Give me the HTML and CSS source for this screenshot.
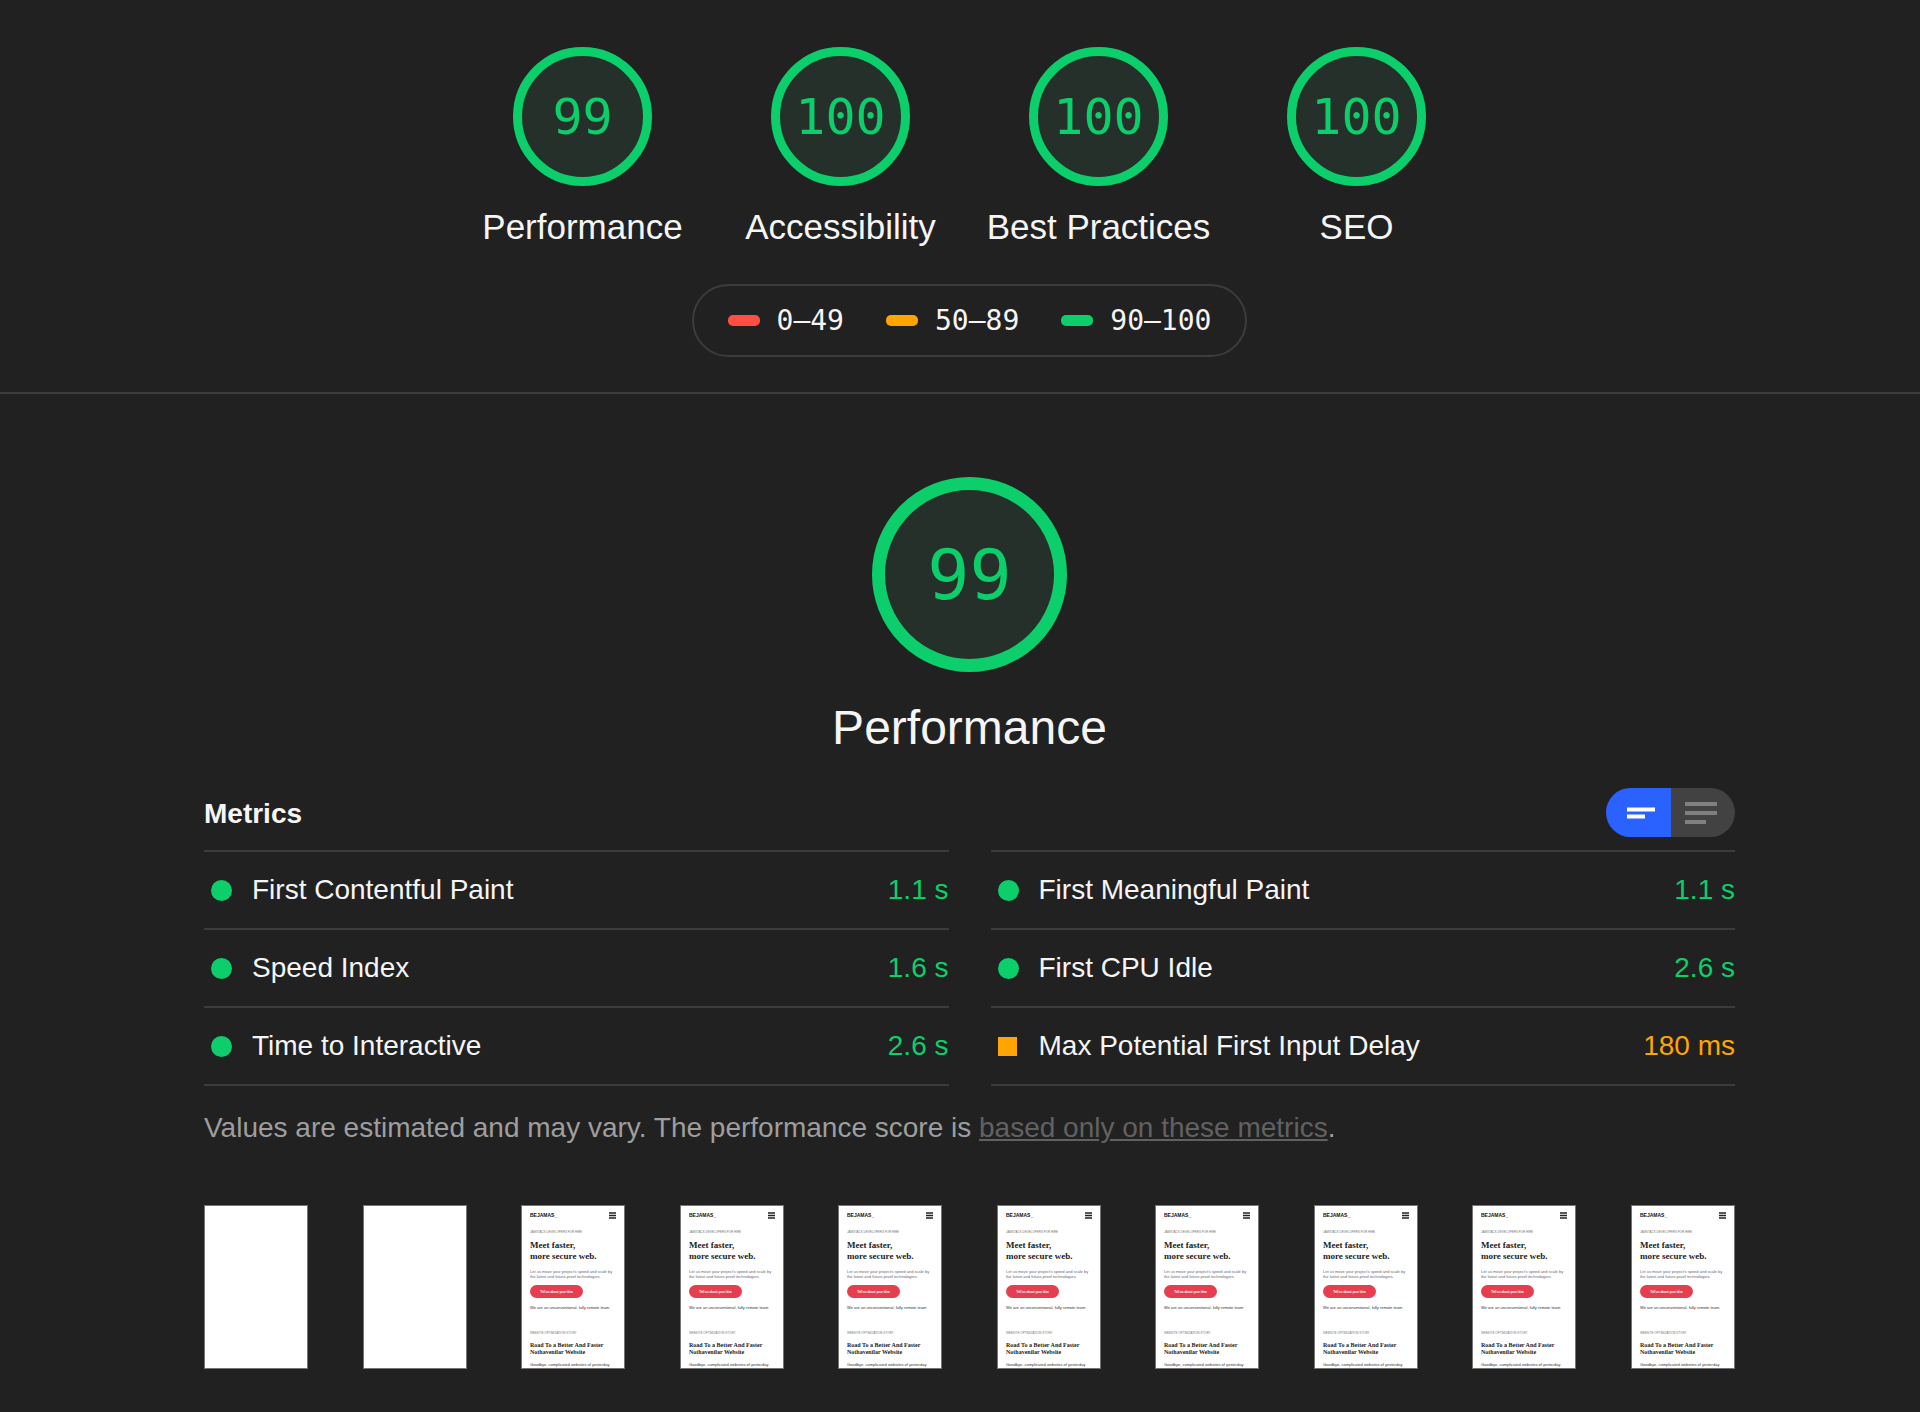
FILE: index.html
```html
<!DOCTYPE html>
<html lang="en">
<head>
    <meta charset="UTF-8">
    <meta name="viewport" content="width=device-width, initial-scale=1.0">
    <title>Lighthouse Report</title>
    <link rel="stylesheet" href="styles.css">
</head>
<body>
    <!-- Scores Header -->
    <header class="scores">
        <div class="gauges">
            <a class="gauge" href="#performance">
                <span class="gauge-circle">99</span>
                <span class="gauge-label">Performance</span>
            </a>
            <a class="gauge" href="#accessibility">
                <span class="gauge-circle">100</span>
                <span class="gauge-label">Accessibility</span>
            </a>
            <a class="gauge" href="#best-practices">
                <span class="gauge-circle">100</span>
                <span class="gauge-label">Best Practices</span>
            </a>
            <a class="gauge" href="#seo">
                <span class="gauge-circle">100</span>
                <span class="gauge-label">SEO</span>
            </a>
        </div>
        <div class="scale">
            <span class="range fail">0–49</span>
            <span class="range average">50–89</span>
            <span class="range pass">90–100</span>
        </div>
    </header>

    <!-- Performance Section -->
    <main class="category" id="performance">
        <div class="gauge gauge-large">
            <span class="gauge-circle">99</span>
            <h1 class="gauge-label">Performance</h1>
        </div>

        <div class="metrics-header">
            <h2>Metrics</h2>
            <label class="toggle">
                <input type="checkbox" aria-label="Show metric descriptions">
                <span class="toggle-short">
                    <svg width="28" height="12" viewBox="0 0 28 12"><path d="M0 2.5h28M0 9.5h18" stroke="currentColor" stroke-width="4"/></svg>
                </span>
                <span class="toggle-long">
                    <svg width="32" height="22" viewBox="0 0 32 22"><path d="M0 2h32M0 11h32M0 20h21" stroke="currentColor" stroke-width="4"/></svg>
                </span>
            </label>
        </div>

        <div class="metrics">
            <ul class="metrics-column">
                <li class="metric pass"><span class="metric-title">First Contentful Paint</span><span class="metric-value">1.1 s</span></li>
                <li class="metric pass"><span class="metric-title">Speed Index</span><span class="metric-value">1.6 s</span></li>
                <li class="metric pass"><span class="metric-title">Time to Interactive</span><span class="metric-value">2.6 s</span></li>
            </ul>
            <ul class="metrics-column">
                <li class="metric pass"><span class="metric-title">First Meaningful Paint</span><span class="metric-value">1.1 s</span></li>
                <li class="metric pass"><span class="metric-title">First CPU Idle</span><span class="metric-value">2.6 s</span></li>
                <li class="metric average"><span class="metric-title">Max Potential First Input Delay</span><span class="metric-value">180 ms</span></li>
            </ul>
        </div>

        <p class="disclaimer">Values are estimated and may vary. The performance score is <a href="#scoring">based only on these metrics</a>.</p>

        <!-- Filmstrip: the first loaded frame is reused by the ones after it -->
        <div class="filmstrip">
            <div class="frame"></div>
            <div class="frame"></div>
            <div class="frame">
                <svg viewBox="0 0 102 162">
                    <g id="preview">
                        <text class="pv-logo" x="8" y="11">BEJAMAS_</text>
                        <path d="M87 7h7M87 9.5h7M87 12h7" stroke="#222" stroke-width="1.5"/>
                        <text class="pv-kicker" x="8" y="27">JAMSTACK DEVELOPERS FOR HIRE</text>
                        <text class="pv-title" x="8" y="42">Meet faster,</text>
                        <text class="pv-title" x="8" y="53">more secure web.</text>
                        <text class="pv-text" x="8" y="67">Let us move your project's speed and scale by</text>
                        <text class="pv-text" x="8" y="72">the latest and future-proof technologies.</text>
                        <rect x="8" y="79" width="53" height="13" rx="6.5" fill="#e63e4e"/>
                        <text class="pv-button" x="34.5" y="87">Tell us about your idea</text>
                        <text class="pv-note" x="8" y="103">We are an unconventional, fully remote team</text>
                        <text class="pv-kicker" x="8" y="128">WEBSITE OPTIMIZATION STORY</text>
                        <text class="pv-subtitle" x="8" y="141">Road To a Better And Faster</text>
                        <text class="pv-subtitle" x="8" y="148">Nothavenilar Website</text>
                        <text class="pv-note" x="8" y="160">Goodbye, complicated websites of yesterday</text>
                    </g>
                </svg>
            </div>
            <div class="frame"><svg viewBox="0 0 102 162"><use href="#preview"/></svg></div>
            <div class="frame"><svg viewBox="0 0 102 162"><use href="#preview"/></svg></div>
            <div class="frame"><svg viewBox="0 0 102 162"><use href="#preview"/></svg></div>
            <div class="frame"><svg viewBox="0 0 102 162"><use href="#preview"/></svg></div>
            <div class="frame"><svg viewBox="0 0 102 162"><use href="#preview"/></svg></div>
            <div class="frame"><svg viewBox="0 0 102 162"><use href="#preview"/></svg></div>
            <div class="frame"><svg viewBox="0 0 102 162"><use href="#preview"/></svg></div>
        </div>
    </main>
</body>
</html>
```
FILE: styles.css
```css
/* Global Styles */
:root {
    --pass: #0cce6b;
    --average: #ffa400;
    --fail: #ff4e42;
    --line: #3c3c3c;
}

* {
    box-sizing: border-box;
}

body {
    margin: 0;
    background: #212121;
    color: #f5f5f5;
    font-family: Helvetica, "Liberation Sans", Arial, sans-serif;
    font-size: 28px;
    line-height: 40px;
}

.pass {
    --color: var(--pass);
}

.average {
    --color: var(--average);
}

.fail {
    --color: var(--fail);
}

/* Scores Header */
.scores {
    display: flex;
    flex-direction: column;
    align-items: center;
    padding: 47px 185px 35px 204px;
    border-bottom: 2px solid var(--line);
}

.gauges {
    display: flex;
    flex-wrap: wrap;
    justify-content: center;
}

.gauge {
    display: flex;
    flex-direction: column;
    align-items: center;
    gap: 21px;
    width: 258px;
    color: inherit;
    text-decoration: none;
}

.gauge-circle {
    display: flex;
    justify-content: center;
    align-items: center;
    width: 139px;
    height: 139px;
    border: 9px solid var(--pass);
    border-radius: 50%;
    background: #25302a;
    color: var(--pass);
    font-family: Menlo, "DejaVu Sans Mono", monospace;
    font-size: 50px;
}

.gauge-label {
    margin: 0;
    font-size: 35px;
    font-weight: normal;
    white-space: nowrap;
}

.scale {
    display: flex;
    align-items: center;
    gap: 42px;
    height: 73px;
    margin-top: 37px;
    padding: 0 34px;
    border: 2px solid var(--line);
    border-radius: 37px;
    font-family: Menlo, "DejaVu Sans Mono", monospace;
    font-size: 28px;
}

.range {
    display: flex;
    align-items: center;
    gap: 17px;
}

.range::before {
    content: "";
    width: 32px;
    height: 11px;
    border-radius: 5px;
    background: var(--color);
}

/* Performance Section */
.category {
    padding: 83px 185px 43px 204px;
}

.gauge-large {
    gap: 28px;
    width: auto;
    margin-bottom: 32px;
}

.gauge-large .gauge-circle {
    width: 195px;
    height: 195px;
    border-width: 13px;
    font-size: 70px;
}

.gauge-large .gauge-label {
    font-size: 48px;
    line-height: 56px;
}

.metrics-header {
    display: flex;
    justify-content: space-between;
    align-items: flex-end;
    margin-bottom: 13px;
}

.metrics-header h2 {
    margin: 0;
    padding-bottom: 3px;
    font-size: 28px;
}

.toggle {
    display: flex;
    position: relative;
    width: 129px;
    height: 49px;
    border-radius: 25px;
    overflow: hidden;
    cursor: pointer;
}

.toggle input {
    position: absolute;
    inset: 0;
    margin: 0;
    opacity: 0;
}

.toggle span {
    display: flex;
    align-items: center;
    width: 50%;
}

.toggle-short {
    justify-content: center;
    padding-left: 5px;
    background: #2962ff;
    color: #fff;
}

.toggle-long {
    padding-left: 14px;
    background: #424242;
    color: #808080;
}

/* Metrics */
.metrics {
    display: grid;
    grid-template-columns: 1fr 1fr;
    gap: 42px;
}

.metrics-column {
    margin: 0;
    padding: 0;
    list-style: none;
    border-top: 2px solid var(--line);
}

.metric {
    display: flex;
    align-items: center;
    padding: 18px 0 18px 7px;
    border-bottom: 2px solid var(--line);
}

.metric::before {
    content: "";
    width: 21px;
    height: 21px;
    margin-right: 20px;
    border-radius: 50%;
    background: var(--color);
}

.metric.average::before {
    width: 19px;
    height: 19px;
    margin-right: 22px;
    border-radius: 0;
}

.metric-title {
    flex: 1;
}

.metric-value {
    color: var(--color);
}

.disclaimer {
    margin: 22px 0 57px;
    color: #9e9e9e;
}

.disclaimer a {
    color: #616161;
}

/* Filmstrip */
.filmstrip {
    display: flex;
    justify-content: space-between;
}

.frame {
    width: 104px;
    height: 164px;
    border: 1px solid #757575;
    background: #fff;
}

.frame svg {
    display: block;
    width: 100%;
    height: 100%;
}

/* Text inside the page preview */
.pv-logo {
    font-size: 5px;
    font-weight: bold;
    fill: #111;
}

.pv-kicker {
    font-size: 3px;
    fill: #777;
}

.pv-title {
    font-family: "Liberation Serif", serif;
    font-size: 9px;
    font-weight: bold;
    fill: #222;
}

.pv-text {
    font-size: 4px;
    fill: #667;
}

.pv-button {
    font-size: 3px;
    font-weight: bold;
    text-anchor: middle;
    fill: #fff;
}

.pv-note {
    font-size: 4px;
    fill: #333;
}

.pv-subtitle {
    font-family: "Liberation Serif", serif;
    font-size: 6px;
    font-weight: bold;
    fill: #222;
}
```
